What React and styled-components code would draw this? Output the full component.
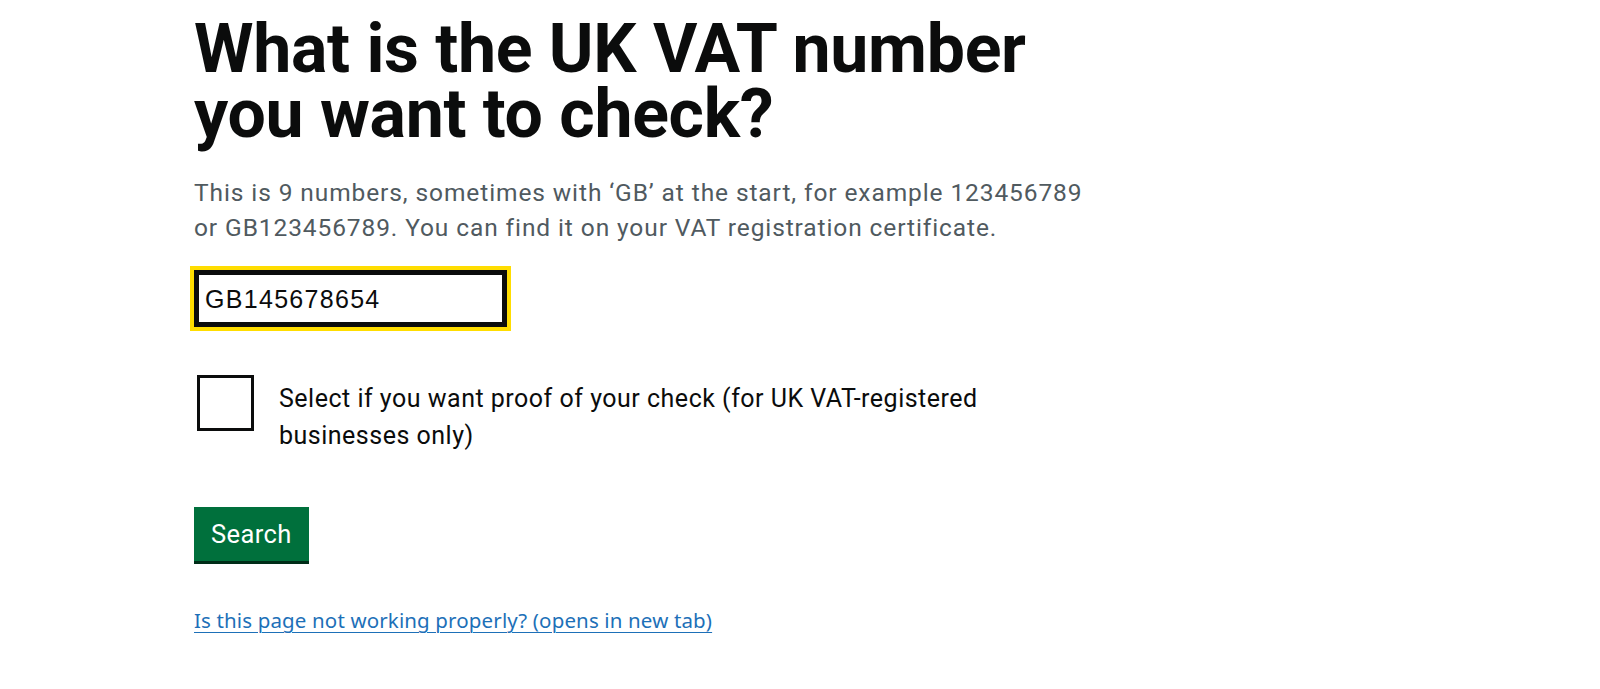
import styled, { createGlobalStyle } from "styled-components"

const GlobalStyle = createGlobalStyle`
  html, body {
    margin: 0;
    padding: 0;
    background: #ffffff;
  }
  body {
    font-family: Roboto, "Liberation Sans", Arial, sans-serif;
    color: #0b0c0c;
  }
`;

const App = () => {
  return (
    <Page>
      <GlobalStyle />
      <Main>
        <Heading>What is the UK VAT number you want to check?</Heading>
        <Hint>
          This is 9 numbers, sometimes with ‘GB’ at the start, for example 123456789
          or GB123456789. You can find it on your VAT registration certificate.
        </Hint>
        <VatInput type="text" defaultValue="GB145678654" aria-label="UK VAT number" />
        <CheckRow>
          <CheckBox />
          <CheckLabel>
            Select if you want proof of your check (for UK VAT-registered businesses only)
          </CheckLabel>
        </CheckRow>
        <SearchButton type="button">Search</SearchButton>
        <HelpLine>
          <HelpLink href="#">Is this page not working properly? (opens in new tab)</HelpLink>
        </HelpLine>
      </Main>
    </Page>
  )
}

export default App


const Page = styled.div`
  width: 100%;
  min-height: 689px;
  background: #ffffff;
`;

// main column
const Main = styled.main`
  display: flex;
  flex-direction: column;
  align-items: flex-start;
  padding-left: 194px;
  padding-top: 17px;
  width: 920px;
`;

const Heading = styled.h1`
  margin: 0;
  max-width: 860px;
  font-family: Roboto, "Liberation Sans", Arial, sans-serif;
  font-weight: 700;
  font-size: 68px;
  line-height: 65px;
  letter-spacing: -0.3px;
  color: #0b0c0c;
`;

const Hint = styled.p`
  margin: 28px 0 0;
  max-width: 905px;
  font-size: 24.5px;
  line-height: 35px;
  letter-spacing: 0.9px;
  color: #505a5f;
`;

const VatInput = styled.input`
  box-sizing: border-box;
  margin: 25px 0 0;
  width: 313px;
  height: 57px;
  padding: 2px 6px 0;
  border: 5px solid #0b0c0c;
  border-radius: 0;
  outline: 4px solid #ffdd00;
  font-family: "Liberation Sans", Arial, sans-serif;
  font-size: 25px;
  letter-spacing: 1.3px;
  color: #0b0c0c;
  background: #ffffff;
`;

const CheckRow = styled.div`
  display: flex;
  align-items: flex-start;
  gap: 25px;
  margin-top: 48px;
  padding-left: 3px;
`;

const CheckBox = styled.span`
  box-sizing: border-box;
  flex: none;
  width: 57px;
  height: 56px;
  border: 3px solid #0b0c0c;
  background: #ffffff;
`;

const CheckLabel = styled.label`
  max-width: 745px;
  padding-top: 5px;
  font-size: 25px;
  line-height: 37px;
  letter-spacing: 0.5px;
  color: #0b0c0c;
`;

const SearchButton = styled.button`
  box-sizing: border-box;
  margin-top: 53px;
  height: 54px;
  padding: 0 17px;
  border: 0;
  border-radius: 0;
  background: #00703c;
  box-shadow: 0 3px 0 #002d18;
  color: #ffffff;
  font-family: Roboto, "Liberation Sans", Arial, sans-serif;
  font-size: 25.5px;
  letter-spacing: 0.4px;
  cursor: pointer;
`;

const HelpLine = styled.p`
  margin: 47px 0 0;
  font-family: "Noto Sans", Roboto, sans-serif;
  font-size: 20.5px;
  line-height: 25px;
  letter-spacing: 0.14px;
`;

const HelpLink = styled.a`
  color: #1d70b8;
  text-decoration: underline;
  text-underline-offset: 4px;
  text-decoration-thickness: 1px;
`;
